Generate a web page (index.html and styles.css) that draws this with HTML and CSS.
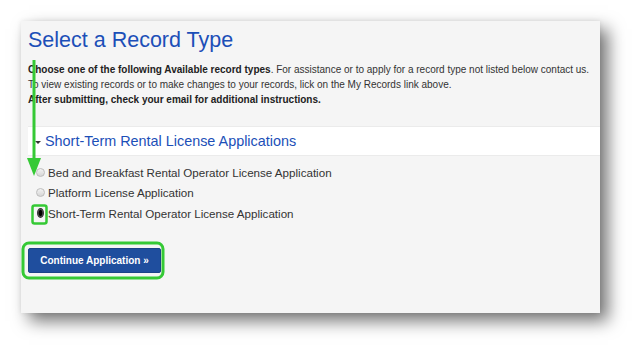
FILE: index.html
```html
<!DOCTYPE html>
<html>
<head>
<meta charset="utf-8">
<link rel="stylesheet" href="styles.css">
</head>
<body>
<div class="panel">
  <h1 class="title">Select a Record Type</h1>
  <p class="intro">
    <b>Choose one of the following Available record types</b>. For assistance or to apply for a record type not listed below contact us.<br>
    To view existing records or to make changes to your records, lick on the My Records link above.<br>
    <b>After submitting, check your email for additional instructions.</b>
  </p>
  <div class="band">
    <span class="caret"></span>
    <span class="band-title">Short-Term Rental License Applications</span>
  </div>
  <div class="options">
    <label class="opt"><span class="radio"></span>Bed and Breakfast Rental Operator License Application</label>
    <label class="opt"><span class="radio"></span>Platform License Application</label>
    <label class="opt"><span class="radio checked"></span>Short-Term Rental Operator License Application</label>
  </div>
  <div class="actions">
    <button class="btn">Continue Application &raquo;</button>
  </div>
</div>
<svg class="annot" width="642" height="355" viewBox="0 0 642 355">
  <line x1="34" y1="60" x2="34" y2="160" stroke="#35c935" stroke-width="3"/>
  <polygon points="27,158 41,158 34,176" fill="#35c935"/>
  <rect x="32.5" y="205.5" width="14" height="18" rx="2" fill="none" stroke="#35c935" stroke-width="2.5"/>
  <rect x="23" y="243" width="140" height="35" rx="6" fill="none" stroke="#35c935" stroke-width="3"/>
</svg>
</body>
</html>
```
FILE: styles.css
```css
html, body {
  margin: 0;
  padding: 0;
  background: #ffffff;
}
body {
  width: 642px;
  height: 355px;
  overflow: hidden;
  position: relative;
  font-family: "Liberation Sans", Arial, sans-serif;
}
.panel {
  margin: 21px 0 0 21px;
  width: 572px;
  height: 292px;
  padding: 0 0 0 7px;
  background: #f5f5f5;
  box-shadow: 8px 8px 16px rgba(0,0,0,0.55), 0 0 5px rgba(0,0,0,0.08);
}
.title {
  margin: 0;
  padding-top: 6px;
  font-size: 21.5px;
  line-height: 26px;
  font-weight: normal;
  color: #1c4fb8;
}
.intro {
  margin: 9px 0 0 0;
  font-size: 10px;
  line-height: 15px;
  color: #333333;
}
.intro b {
  color: #222222;
}
.band {
  margin-top: 19px;
  height: 28px;
  background: #ffffff;
  border-top: 1px solid #ebebeb;
  border-bottom: 1px solid #ebebeb;
  display: flex;
  align-items: center;
}
.caret {
  width: 0;
  height: 0;
  margin-left: 7px;
  margin-right: 4px;
  margin-top: 2px;
  border-left: 3px solid transparent;
  border-right: 3px solid transparent;
  border-top: 3px solid #333;
}
.band-title {
  font-size: 14.4px;
  color: #1c4fb8;
}
.options {
  margin-top: 6px;
  display: flex;
  flex-direction: column;
}
.opt {
  display: flex;
  align-items: center;
  height: 20.5px;
  font-size: 11.6px;
  color: #333333;
}
.radio {
  width: 9px;
  height: 9px;
  border-radius: 50%;
  border: 1px solid #bdbdbd;
  background: linear-gradient(#f2f2f2, #d6d6d6);
  margin-left: 8px;
  margin-right: 3px;
  box-sizing: border-box;
  flex: none;
}
.radio.checked {
  background: radial-gradient(ellipse at center, #000 0 45%, #444 60%, #888 100%);
  border-color: #333;
  width: 7px;
  height: 10px;
  margin-left: 9px;
  margin-right: 4px;
}
.actions {
  margin-top: 24px;
}
.btn {
  font-family: "Liberation Sans", Arial, sans-serif;
  font-size: 10px;
  font-weight: bold;
  color: #ffffff;
  background: #1f4e9e;
  border: 1px solid #1a4287;
  border-radius: 2px;
  height: 25px;
  padding: 0 11px;
  margin-left: 0;
  width: 133px;
}
.annot {
  position: absolute;
  left: 0;
  top: 0;
  pointer-events: none;
}
```
